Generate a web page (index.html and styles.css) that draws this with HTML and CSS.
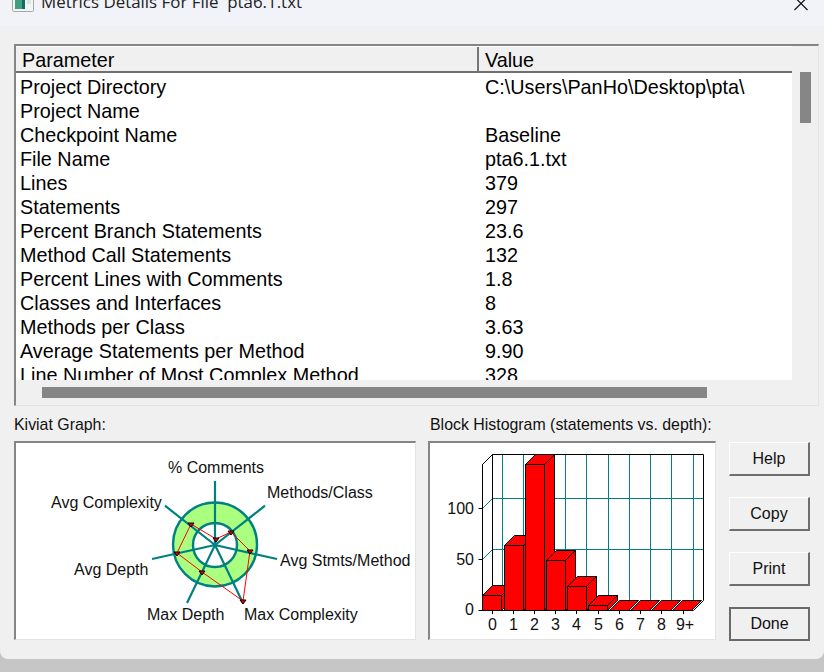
FILE: index.html
```html
<!DOCTYPE html>
<html lang="en">
<head>
<meta charset="utf-8">
<title>Metrics Details</title>
<link rel="stylesheet" href="styles.css">
</head>
<body>
<div class="window">
  <header class="titlebar">
    <svg class="app-icon" width="22" height="12" viewBox="0 0 22 12"><rect x="0.5" y="-8" width="21" height="19.5" rx="1" fill="#f4f4f4" stroke="#a4a8a8"/><rect x="3" y="-6" width="7" height="15" fill="#3f9f7f"/><rect x="10" y="-6" width="3" height="15" fill="#0f6f6f"/><rect x="15" y="0" width="4" height="4" fill="#dfe2e2"/></svg>
    <span class="title">Metrics Details For File  pta6.1.txt</span>
    <svg class="close" width="16" height="12" viewBox="0 0 16 12"><path d="M1.5 -3 L14.5 10 M14.5 -3 L1.5 10" stroke="#111" stroke-width="1.2" fill="none"/></svg>
  </header>
  <main class="content">
    <section class="table-frame">
      <div class="table-main">
        <div class="table-head">
          <div class="head-param">Parameter</div>
          <div class="head-value">Value</div>
        </div>
        <div class="table-body">
          <div class="row"><span>Project Directory</span><span>C:\Users\PanHo\Desktop\pta\</span></div>
          <div class="row"><span>Project Name</span><span></span></div>
          <div class="row"><span>Checkpoint Name</span><span>Baseline</span></div>
          <div class="row"><span>File Name</span><span>pta6.1.txt</span></div>
          <div class="row"><span>Lines</span><span>379</span></div>
          <div class="row"><span>Statements</span><span>297</span></div>
          <div class="row"><span>Percent Branch Statements</span><span>23.6</span></div>
          <div class="row"><span>Method Call Statements</span><span>132</span></div>
          <div class="row"><span>Percent Lines with Comments</span><span>1.8</span></div>
          <div class="row"><span>Classes and Interfaces</span><span>8</span></div>
          <div class="row"><span>Methods per Class</span><span>3.63</span></div>
          <div class="row"><span>Average Statements per Method</span><span>9.90</span></div>
          <div class="row"><span>Line Number of Most Complex Method</span><span>328</span></div>
        </div>
        <div class="hscroll"><div class="hthumb"></div></div>
      </div>
      <div class="vscroll"><div class="vthumb"></div></div>
    </section>
    <section class="lower">
      <div class="graph-col kiviat-col">
        <div class="graph-label">Kiviat Graph:</div>
        <div class="graph-panel">
          <svg class="chart" width="399" height="196" viewBox="16 443 399 196">
            <circle cx="215" cy="544.5" r="42" fill="#aaff80" stroke="#008080" stroke-width="2.4"/>
            <circle cx="215" cy="545" r="22" fill="#fff" stroke="#008080" stroke-width="2.4"/>
            <path d="M215 545V481M215 545L265 505.7M215 545L277 559M215 545L243 603M215 545L187 603M215 545L152 559M215 545L165 505.7" stroke="#008080" stroke-width="2.2" fill="none"/>
            <polygon points="216,539 231,532 250,551 243,601 202,572 177,553 191,524" fill="none" stroke="#f00" stroke-width="1"/>
            <path d="M213 538h6l-3 4zM228 531h6l-3 4zM247 550h6l-3 4zM240 600h6l-3 4zM199 571h6l-3 4zM174 552h6l-3 4zM188 523h6l-3 4z" fill="#e00" stroke="#000" stroke-width="1"/>
            <g class="chart-text">
              <text x="216" y="473" text-anchor="middle">% Comments</text>
              <text x="267" y="498">Methods/Class</text>
              <text x="280" y="566">Avg Stmts/Method</text>
              <text x="244" y="620">Max Complexity</text>
              <text x="147" y="620">Max Depth</text>
              <text x="74" y="575">Avg Depth</text>
              <text x="51" y="508">Avg Complexity</text>
            </g>
          </svg>
        </div>
      </div>
      <div class="graph-col histogram-col">
        <div class="graph-label">Block Histogram (statements vs. depth):</div>
        <div class="graph-panel">
          <svg class="chart" width="285" height="196" viewBox="430 443 285 196">
            <path d="M502.5 454.5V600.5M523.5 454.5V600.5M544.5 454.5V600.5M565.5 454.5V600.5M586.5 454.5V600.5M608.5 454.5V600.5M629.5 454.5V600.5M650.5 454.5V600.5M671.5 454.5V600.5M693.5 454.5V600.5M492.5 498.5H703.5M492.5 549.5H703.5M482.5 508.5L492.5 498.5M482.5 559.5L492.5 549.5" stroke="#008080" fill="none"/>
            <path d="M482.5 464.5L492.5 454.5H703.5V600.5L693.5 610.5H482.5ZM482.5 464.5V610.5M492.5 454.5V600.5" stroke="#000" fill="none"/>
            <g class="bars" fill="#f00" stroke="#000">
              <path d="M482.5 595.5L492.5 585.5H511.5L501.5 595.5ZM501.5 595.5L511.5 585.5V600.5L501.5 610.5ZM482.5 595.5H501.5V610.5H482.5Z"/>
              <path d="M504.5 545.5L514.5 535.5H533.5L523.5 545.5ZM523.5 545.5L533.5 535.5V600.5L523.5 610.5ZM504.5 545.5H523.5V610.5H504.5Z"/>
              <path d="M525.5 464.5L535.5 454.5H554.5L544.5 464.5ZM544.5 464.5L554.5 454.5V600.5L544.5 610.5ZM525.5 464.5H544.5V610.5H525.5Z"/>
              <path d="M546.5 560.5L556.5 550.5H575.5L565.5 560.5ZM565.5 560.5L575.5 550.5V600.5L565.5 610.5ZM546.5 560.5H565.5V610.5H546.5Z"/>
              <path d="M567.5 586.5L577.5 576.5H596.5L586.5 586.5ZM586.5 586.5L596.5 576.5V600.5L586.5 610.5ZM567.5 586.5H586.5V610.5H567.5Z"/>
              <path d="M588.5 605.5L598.5 595.5H617.5L607.5 605.5ZM607.5 605.5L617.5 595.5V600.5L607.5 610.5ZM588.5 605.5H607.5V610.5H588.5Z"/>
              <path d="M609.5 610.5L619.5 600.5H638.5L628.5 610.5Z"/>
              <path d="M630.5 610.5L640.5 600.5H659.5L649.5 610.5Z"/>
              <path d="M651.5 610.5L661.5 600.5H680.5L670.5 610.5Z"/>
              <path d="M672.5 610.5L682.5 600.5H701.5L691.5 610.5Z"/>
            </g>
            <path d="M478.5 508.5H482.5M478.5 559.5H482.5M478.5 610.5H482.5M492.5 610.5V614M513.5 610.5V614M534.5 610.5V614M555.5 610.5V614M576.5 610.5V614M598.5 610.5V614M619.5 610.5V614M640.5 610.5V614M661.5 610.5V614M683.5 610.5V614" stroke="#000" fill="none"/>
            <g class="axis-text">
              <text x="474" y="514" text-anchor="end">100</text>
              <text x="474" y="565" text-anchor="end">50</text>
              <text x="474" y="615" text-anchor="end">0</text>
              <text x="492.5" y="630" text-anchor="middle">0</text>
              <text x="513.5" y="630" text-anchor="middle">1</text>
              <text x="534.5" y="630" text-anchor="middle">2</text>
              <text x="555.5" y="630" text-anchor="middle">3</text>
              <text x="576.5" y="630" text-anchor="middle">4</text>
              <text x="598.5" y="630" text-anchor="middle">5</text>
              <text x="619.5" y="630" text-anchor="middle">6</text>
              <text x="640.5" y="630" text-anchor="middle">7</text>
              <text x="661.5" y="630" text-anchor="middle">8</text>
              <text x="685" y="630" text-anchor="middle">9+</text>
            </g>
          </svg>
        </div>
      </div>
      <div class="buttons">
        <button class="btn">Help</button>
        <button class="btn">Copy</button>
        <button class="btn">Print</button>
        <button class="btn btn-default">Done</button>
      </div>
    </section>
  </main>
</div>
</body>
</html>
```
FILE: styles.css
```css
* { box-sizing: border-box; }
html, body { margin: 0; padding: 0; }
body {
  width: 824px;
  height: 672px;
  overflow: hidden;
  background: linear-gradient(#8a8a8a, #c6c6c6);
  font-family: "Liberation Sans", Arial, sans-serif;
  color: #000;
}
.window {
  width: 824px;
  height: 659px;
  background: #f0f0f0;
  border-radius: 0 0 8px 8px;
  overflow: hidden;
}
.titlebar {
  height: 26px;
  background: #f1f3f9;
  display: flex;
  align-items: flex-start;
  padding-left: 12px;
  overflow: hidden;
}
.app-icon { flex: none; }
.title {
  margin-left: 7px;
  margin-top: -10px;
  font-family: "Open Sans", sans-serif;
  font-size: 16.9px;
  line-height: 24px;
  white-space: pre;
  color: #222;
}
.close { margin-left: auto; margin-right: 15px; flex: none; }
.content { padding: 18px 5px 0 14px; }
.table-frame {
  height: 362px;
  display: flex;
  border-top: 2px solid #858585;
  border-left: 2px solid #858585;
  border-right: 1px solid #e3e3e3;
  border-bottom: 1px solid #e3e3e3;
  width: 805px;
}
.table-main { width: 776px; display: flex; flex-direction: column; }
.table-head {
  display: flex;
  height: 27px;
  background: #f0f0f0;
  border-top: 1px solid #fff;
  border-bottom: 2px solid #6f6f6f;
  font-size: 19.8px;
  line-height: 26px;
}
.head-param { width: 463px; padding-left: 6px; border-right: 2px solid #777; }
.head-value { padding-left: 6px; }
.table-body {
  height: 307px;
  background: #fff;
  overflow: hidden;
  padding: 2px 0 0 4px;
  font-size: 19.8px;
  line-height: 24px;
}
.row { display: flex; height: 24px; white-space: nowrap; }
.row span:first-child { width: 465px; flex: none; }
.hscroll { height: 25px; padding: 7px 0 0 26px; }
.hthumb { width: 665px; height: 11px; background: #868686; }
.vscroll { flex: 1; padding: 26px 0 0 8px; }
.vthumb { width: 11px; height: 51px; background: #868686; }
.lower { display: flex; margin-top: 8px; }
.graph-label {
  font-size: 15.9px;
  line-height: 20px;
  height: 27px;
  padding-top: 1px;
  color: #111;
}
.graph-panel {
  height: 199px;
  background: #fff;
  border-top: 2px solid #858585;
  border-left: 2px solid #858585;
  border-right: 1px solid #e3e3e3;
  border-bottom: 1px solid #e3e3e3;
  overflow: hidden;
}
.chart { display: block; }
.kiviat-col { width: 402px; }
.histogram-col { width: 288px; margin-left: 12px; }
.histogram-col .graph-label { padding-left: 2px; }
.chart-text text { font-size: 16px; fill: #111; }
.axis-text text { font-size: 16px; fill: #111; }
.buttons {
  margin-left: 13px;
  padding-top: 28px;
  display: flex;
  flex-direction: column;
  gap: 21px;
}
.btn {
  width: 81px;
  height: 34px;
  background: #f0f0f0;
  border: 1px solid;
  border-color: #fff #6e6e6e #6e6e6e #fff;
  border-bottom-width: 2px;
  border-right-width: 2px;
  padding: 0;
  font-family: "Liberation Sans", Arial, sans-serif;
  font-size: 16px;
  color: #111;
}
.btn-default {
  border: 2px solid #6a6a6a;
}
```
